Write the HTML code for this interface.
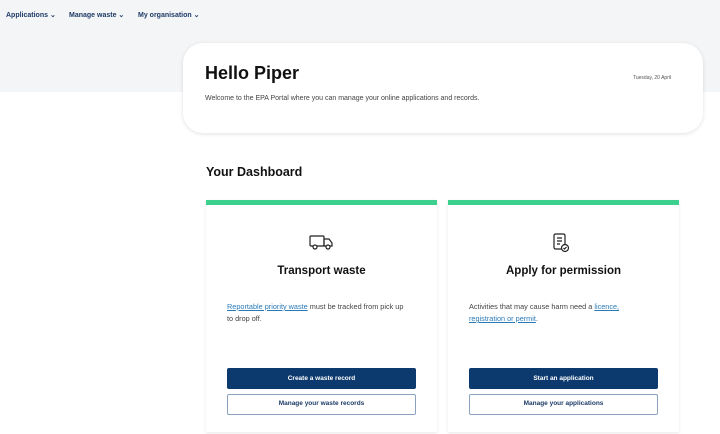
<!DOCTYPE html>
<html><head><style>
*{margin:0;padding:0;box-sizing:border-box}
body{width:720px;height:434px;overflow:hidden;background:#fff;font-family:"Liberation Sans",sans-serif;position:relative;color:#222}
.band{position:absolute;left:0;top:0;width:720px;height:92px;background:#f4f5f7}
.nav{position:absolute;top:11px;font-size:7px;color:#1d3b66;font-weight:bold}
.hello{position:absolute;left:183px;top:43px;width:520px;height:90px;background:#fff;border-radius:20px;box-shadow:0 1px 4px rgba(0,0,0,.12)}
.hello h1{position:absolute;left:22px;top:20px;font-size:18px;font-weight:bold;color:#111}
.hello p{position:absolute;left:22px;top:52px;font-size:7px;color:#444}
.hello .d{position:absolute;left:450px;top:32px;font-size:5px;color:#555}
h2{position:absolute;left:206px;top:165px;font-size:12.5px;font-weight:bold;color:#111}
.card{position:absolute;top:200px;width:231px;height:232px;background:#fff;border-top:5px solid #3ccf8e;box-shadow:0 1px 3px rgba(0,0,0,.1)}
.card h3{position:absolute;top:60px;width:100%;text-align:center;font-size:11.5px;font-weight:bold;color:#111}
.card p{position:absolute;left:21px;top:96px;width:182px;font-size:7.3px;line-height:12px;color:#444}
.card a{color:#2a7ab8;text-decoration:underline}
.b1{position:absolute;left:21px;top:163px;width:189px;height:21px;background:#0d3a6e;border-radius:2px;color:#fff;font-size:6.5px;font-weight:bold;text-align:center;line-height:21px}
.b2{position:absolute;left:21px;top:189px;width:189px;height:21px;background:#fff;border:1.5px solid #8aa1c0;border-radius:2px;color:#1d3b66;font-size:6.5px;font-weight:bold;text-align:center;line-height:18px}
.ic{position:absolute;left:103px;top:28px}
</style></head><body>
<div class="band"></div>
<div class="nav" style="left:6px">Applications ⌄</div>
<div class="nav" style="left:69px">Manage waste ⌄</div>
<div class="nav" style="left:138px">My organisation ⌄</div>
<div class="hello"><h1>Hello Piper</h1><div class="d">Tuesday, 20 April</div><p>Welcome to the EPA Portal where you can manage your online applications and records.</p></div>
<h2>Your Dashboard</h2>
<div class="card" style="left:206px">
<svg class="ic" width="26" height="18" viewBox="0 0 26 18" fill="none" stroke="#222" stroke-width="1.2"><rect x="1" y="3" width="14" height="10" rx="1"/><path d="M15 6h5l3 4v3h-8z"/><circle cx="6" cy="14" r="2" fill="#fff"/><circle cx="19" cy="14" r="2" fill="#fff"/></svg>
<h3>Transport waste</h3>
<p><a>Reportable priority waste</a> must be tracked from pick up to drop off.</p>
<div class="b1">Create a waste record</div><div class="b2">Manage your waste records</div></div>
<div class="card" style="left:448px">
<svg class="ic" width="20" height="20" viewBox="0 0 20 20" fill="none" stroke="#222" stroke-width="1.2"><rect x="3" y="1" width="11" height="15" rx="1.5"/><path d="M6 5h5M6 8h5M6 11h3"/><circle cx="14" cy="15" r="3.5" fill="#fff"/><path d="M12.5 15l1 1 2-2"/></svg>
<h3>Apply for permission</h3>
<p>Activities that may cause harm need a <a>licence,<br>registration or permit</a>.</p>
<div class="b1">Start an application</div><div class="b2">Manage your applications</div></div>
</body></html>
